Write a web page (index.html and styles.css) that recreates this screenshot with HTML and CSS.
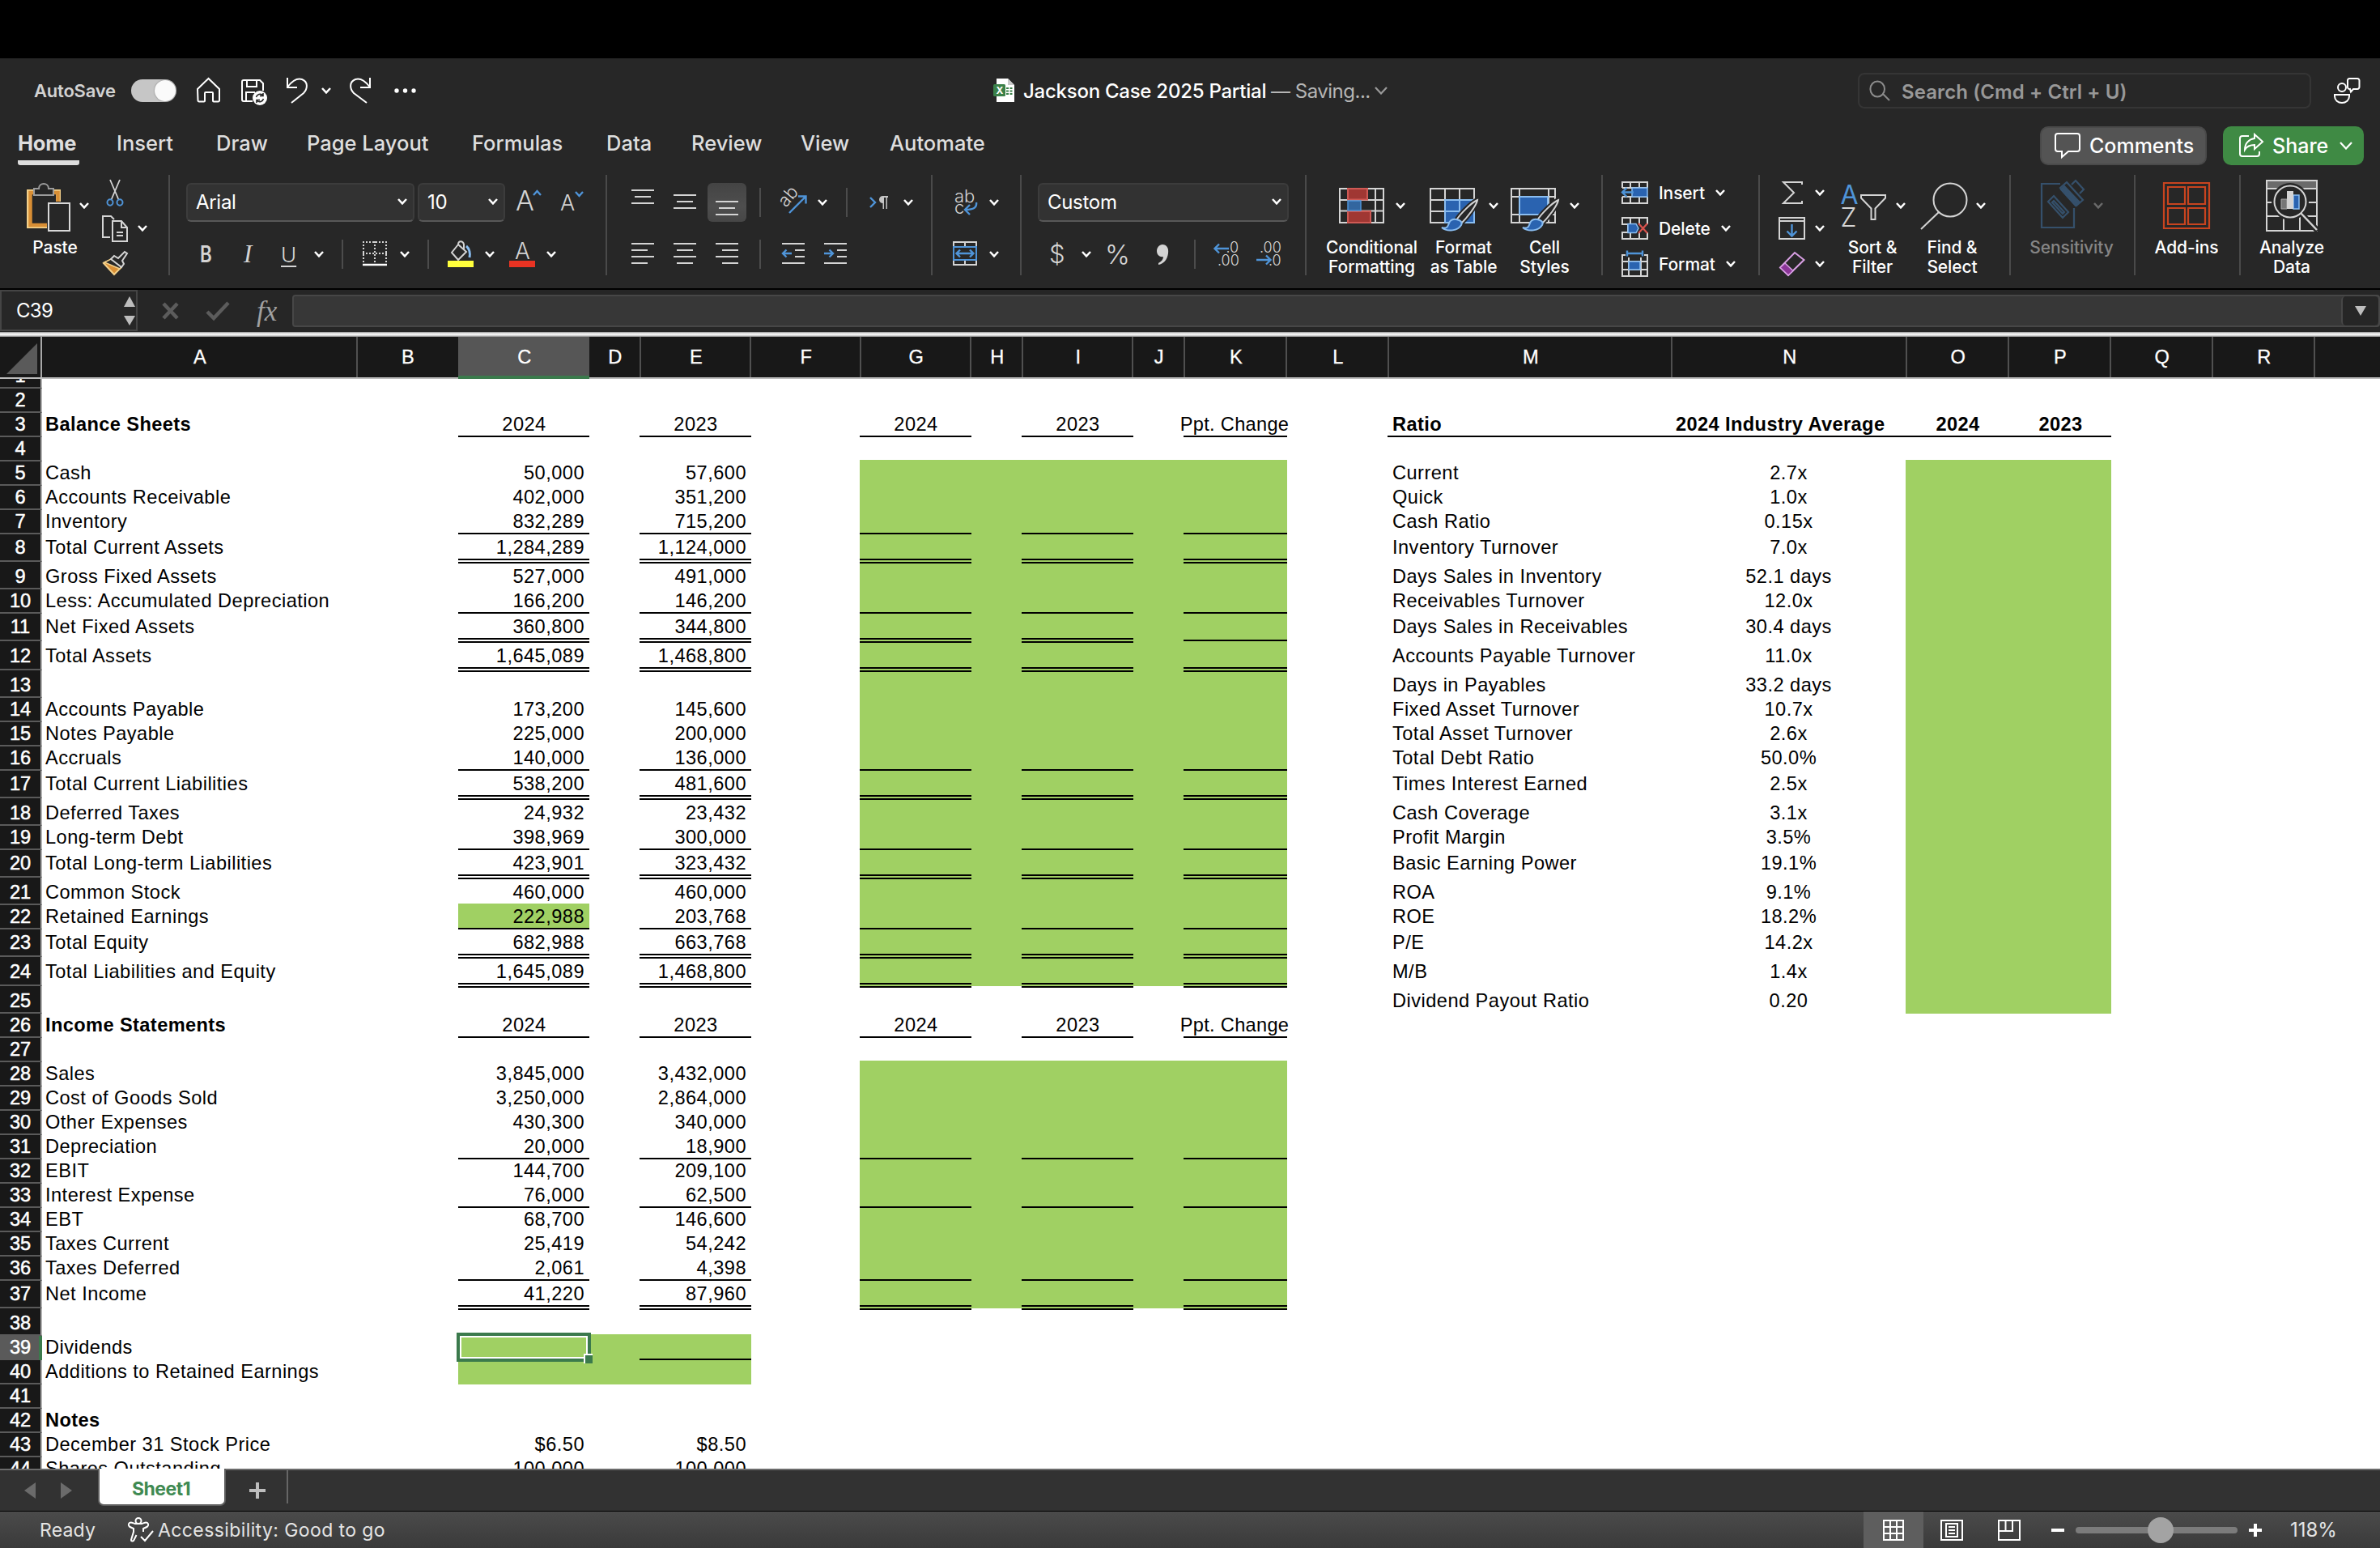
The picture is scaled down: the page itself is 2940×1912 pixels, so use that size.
FILE: index.html
```html
<!DOCTYPE html>
<html lang="en">
<head>
<meta charset="utf-8">
<title>Jackson Case 2025 Partial</title>
<link rel="stylesheet" href="styles.css">
</head>
<body>
<svg class="defs" aria-hidden="true">
  <symbol id="chev" viewBox="0 0 12 8"><path d="M1 1l5 5.4L11 1" fill="none" stroke="currentColor" stroke-width="2.5"/></symbol>
  <symbol id="chev-lg" viewBox="0 0 16 10"><path d="M1 1l7 7.500L15 1" fill="none" stroke="currentColor" stroke-width="2.200"/></symbol>
  <symbol id="brush" viewBox="0 0 48 42"><path d="M46 2C39 5 25 19 20 27l6 4C33 24 45 9 46 2z" fill="#272727" stroke="#272727" stroke-width="6"/><path d="M46 2C39 5 25 19 20 27l6 4C33 24 45 9 46 2z" fill="#272727" stroke="#d4d4d4" stroke-width="2"/><path d="M20 26c-6-1-9 3-10 7s-5 4-8 3c7 6 20 4 24-3 2-4-1-6-6-7z" fill="#2a63b0" stroke="#8abdf0" stroke-width="2"/></symbol>
</svg>

<header class="titlebar">
  <span class="autosave">AutoSave</span>
  <span class="toggle"><i></i></span>
  <svg width="32" height="80" viewBox="242 72 32 80" class="ln w"><path d="M244 110l13.500-13L271 110v14a1.500 1.500 0 0 1-1.500 1.500H264a1 1 0 0 1-1-1V115a1 1 0 0 0-1-1h-8a1 1 0 0 0-1 1v9.500a1 1 0 0 1-1 1h-6a1.500 1.500 0 0 1-1.500-1.500z"/></svg>
  <svg width="34" height="80" viewBox="297 72 34 80" class="ln w"><path d="M312 125h-11a2 2 0 0 1-2-2v-22a2 2 0 0 1 2-2h20l4 4v9M305 99v8h12v-8M304 125v-11h11"/><circle cx="321" cy="121" r="9" fill="#fff" stroke="none"/><path d="M316.500 120a5 5 0 0 1 8-2.500M325 115v3.500h-4M325.500 122a5 5 0 0 1-8 2.500M317 127v-3.500h4" stroke="#272727" stroke-width="1.600"/></svg>
  <svg width="28" height="80" viewBox="353 72 28 80" class="ln w"><path d="M355 96v12h12M355.500 107C361 100 367 96 373 98c8 3 7 12 2 17l-15 12"/></svg>
  <svg class="chev"><use href="#chev"/></svg>
  <svg width="28" height="80" viewBox="430 72 28 80" class="ln w"><path d="M457 96v12h-12M456.500 107C451 100 445 96 439 98c-8 3-7 12-2 17l16 12"/></svg>
  <svg width="28" height="8" viewBox="0 0 28 8"><g fill="#fff"><circle cx="3" cy="4" r="2.700"/><circle cx="13.500" cy="4" r="2.700"/><circle cx="24" cy="4" r="2.700"/></g></svg>
  <svg width="28" height="80" viewBox="1226 72 28 80"><path d="M1231 97h14l8 8v21h-22z" fill="#fff"/><path d="M1245 97v8h8z" fill="#c9c9c9"/><rect x="1227" y="104" width="15" height="15" rx="1.500" fill="#3a8049"/><path d="M1243 108h3v2h-3zm4.500 0h3v2h-3zm-4.500 3.500h3v2h-3zm4.500 0h3v2h-3zm-4.500 3.500h3v2h-3zm4.500 0h3v2h-3z" fill="#3a8049"/><text x="1230.500" y="115.500" class="xl">X</text></svg>
  <span class="doc">Jackson Case 2025 Partial</span>
  <span class="saving">— Saving...</span>
  <svg class="chev-lg dim"><use href="#chev-lg"/></svg>
  <div class="search"><svg width="28" height="28" viewBox="0 0 28 28"><path d="M18 17l8 8M20 11a8.800 9.500 0 1 1-17.600 0 8.800 9.500 0 0 1 17.600 0z" fill="none" stroke="#8c8c8c" stroke-width="2"/></svg><span>Search (Cmd + Ctrl + U)</span></div>
  <svg width="34" height="80" viewBox="2883 72 34 80" class="ln w"><circle cx="2894" cy="108" r="5"/><path d="M2885 117h18v2a9 8 0 0 1-18 0zM2903 97h10a2.500 2.500 0 0 1 2.500 2.500v8a2.500 2.500 0 0 1-2.500 2.500h-5l-3 3.500-1-3.500a2.500 2.500 0 0 1-3-2.500v-8a2.500 2.500 0 0 1 2-2.500z"/></svg>
</header>

<nav class="tabs">
  <a class="on">Home</a><a>Insert</a><a>Draw</a><a>Page Layout</a><a>Formulas</a><a>Data</a><a>Review</a><a>View</a><a>Automate</a>
  <div class="comments"><svg width="34" height="34" viewBox="0 0 34 34" class="ln w"><path d="M5 2h24a3 3 0 0 1 3 3v16a3 3 0 0 1-3 3H18l-8 7v-7H5a3 3 0 0 1-3-3V5a3 3 0 0 1 3-3z"/></svg><span>Comments</span></div>
  <div class="share"><svg width="32" height="32" viewBox="0 0 32 32" class="ln w"><path d="M13 4H5a3 3 0 0 0-3 3v19a3 3 0 0 0 3 3h18a3 3 0 0 0 3-3v-3M20 2l10 9-10 9v-5c-5 0-9 1-12 6 0-8 5-13 12-14z"/></svg><span>Share</span><svg class="chev-lg"><use href="#chev-lg"/></svg></div>
</nav>

<section class="ribbon">
  <div class="group g1">
    <div class="big"><div class="art"><svg width="56" height="64" viewBox="33 222 56 64"><path d="M73 249v-12H37v42h22" fill="none" stroke="#f3d08a" stroke-width="6"/><path d="M72.500 249v-11H38.500v40H59" fill="none" stroke="#d98f35" stroke-width="4.500"/><path d="M43 241v-8h6c0-8 12-8 12 0h6v8z" fill="#272727" stroke="#9b9b9b" stroke-width="2"/><path d="M61 251h26v34H61z" fill="#272727" stroke="#d9d9d9" stroke-width="2"/></svg><svg class="chev"><use href="#chev"/></svg></div><span>Paste</span></div>
    <div class="clip">
      <svg width="34" height="44" viewBox="126 216 34 44" class="ln"><path d="M136 222l10.500 24.500M148 222l-10.500 24.500" stroke-width="1.800"/><g stroke="#4f94d8"><ellipse cx="136" cy="250" rx="3.500" ry="3.800"/><ellipse cx="148" cy="250" rx="3.500" ry="3.800"/></g></svg><i></i>
      <svg width="34" height="44" viewBox="126 260 34 44" class="ln"><path d="M136 293h-9v-26h10l4 4M139 273h11l7 8v17h-18zM150 273v8h7M144 287h8M144 291h8"/></svg><svg class="chev"><use href="#chev"/></svg>
      <svg width="34" height="44" viewBox="126 304 34 44"><path d="M128 325l9-4 13 9-9 9z" fill="#d98f35" stroke="#f3d08a" stroke-width="2"/><path d="M129 324l8-4 13 9-2 3z" fill="#272727" stroke="#f3d08a" stroke-width="1.500"/><path d="M137 320l4-4 5 3 8-8 3 2-6 9 2 4-3 4z" fill="#272727" stroke="#d4d4d4" stroke-width="2"/></svg>
    </div>
  </div>
  <div class="group g2">
    <div class="row r-font">
      <div class="box"><span>Arial</span><svg class="chev"><use href="#chev"/></svg></div>
      <div class="box sz"><span>10</span><svg class="chev"><use href="#chev"/></svg></div>
      <svg width="34" height="48" viewBox="636 226 34 48"><text x="637" y="260" font-size="34" class="lt">A</text><path d="M659 241l4.500-5 4.500 5" class="bl"/></svg>
      <svg width="34" height="48" viewBox="690 226 34 48"><text x="692" y="260" font-size="27" class="lt">A</text><path d="M711 237l4.500 5 4.500-5" class="bl"/></svg>
    </div>
    <div class="row r-style">
      <b class="gB">B</b><i class="gI">I</i><u class="gU">U</u><svg class="chev"><use href="#chev"/></svg><hr>
      <svg width="32" height="48" viewBox="447 290 32 48"><path d="M448 299h30M448 313h30M449 298v27M463 298v27M477 298v27" stroke="#d4d4d4" stroke-width="2" stroke-dasharray="2 2"/><path d="M448 327h30" stroke="#fff" stroke-width="2.500"/></svg><svg class="chev"><use href="#chev"/></svg><hr>
      <svg width="34" height="48" viewBox="553 290 34 48"><path d="M567 302l-8 10 8 9 10-10zM567 302c0-5 6-5 7 0v7" class="ln" fill="none"/><path d="M577 304c4 3 5 9 4 14" stroke="#8abdf0" stroke-width="3" fill="none"/><path d="M554 322h32v8h-32z" fill="#ffff3c"/></svg><svg class="chev"><use href="#chev"/></svg>
      <svg width="34" height="48" viewBox="629 290 34 48"><text x="637" y="320" font-size="28" class="lt">A</text><path d="M630 322h32v8h-32z" fill="#e93323"/></svg><svg class="chev"><use href="#chev"/></svg>
    </div>
  </div>
  <div class="group g3">
    <div class="row r-al1">
      <svg width="28" height="48" viewBox="780 226 28 48" class="ln"><path d="M780 235h28M784 243h20M780 251h28"/></svg>
      <svg width="28" height="48" viewBox="832 226 28 48" class="ln"><path d="M832 241h28M836 249h20M832 257h28"/></svg>
      <svg width="48" height="48" viewBox="874 226 48 48" class="ln act"><path d="M884 249h28M888 257h20M884 265h28"/></svg><hr>
      <svg width="36" height="48" viewBox="962 226 36 48"><text x="0" y="0" font-size="22" class="lt" transform="translate(971 257) rotate(-50)">ab</text><path d="M975 263l20-20M986 242.500h9.500v9" class="bl"/></svg><svg class="chev"><use href="#chev"/></svg><hr>
      <svg width="30" height="48" viewBox="1072 226 30 48"><path d="M1075 244l6 6-6 6" class="bl"/><path d="M1091 242h7v2h-1v14h-1.500v-14H1093v14h-1.500v-7a4.500 4.500 0 0 1 0-9z" fill="#c4c4c4" transform="translate(-1 0)"/></svg><svg class="chev"><use href="#chev"/></svg>
    </div>
    <div class="row r-al2">
      <svg width="28" height="48" viewBox="780 290 28 48" class="ln"><path d="M780 301h28M780 309h20M780 317h28M780 325h20"/></svg>
      <svg width="28" height="48" viewBox="832 290 28 48" class="ln"><path d="M832 301h28M836 309h20M832 317h28M836 325h20"/></svg>
      <svg width="28" height="48" viewBox="884 290 28 48" class="ln"><path d="M884 301h28M892 309h20M884 317h28M892 325h20"/></svg><hr>
      <svg width="28" height="48" viewBox="966 290 28 48" class="ln"><path d="M966 301h28M982 309h12M982 317h12M966 325h28"/><path d="M978 313h-11M971.500 308.500l-4.500 4.500 4.500 4.500" class="bl"/></svg>
      <svg width="28" height="48" viewBox="1018 290 28 48" class="ln"><path d="M1018 301h28M1034 309h12M1034 317h12M1018 325h28"/><path d="M1018 313h11M1024.500 308.500l4.500 4.500-4.500 4.500" class="bl"/></svg>
    </div>
  </div>
  <div class="group g4">
    <div class="row r-wrap"><svg width="32" height="48" viewBox="1178 226 32 48"><text x="1180" y="249.500" font-size="22" class="lt">ab</text><text x="1180" y="264" font-size="22" class="lt">c</text><path d="M1207 250c1 6-3 9-13 9M1199 253l-6 6 6 6" class="bl"/></svg><svg class="chev"><use href="#chev"/></svg></div>
    <div class="row r-wrap"><svg width="32" height="48" viewBox="1176 290 32 48" class="ln"><path d="M1177 299h28v28h-28zM1191 298v7M1191 321v7"/><path d="M1177 305h28v16h-28z" stroke="#4f94d8" fill="#272727"/><path d="M1181 313h20M1185 308.500l-4.500 4.500 4.500 4.500M1197 308.500l4.500 4.500-4.500 4.500" class="bl"/></svg><svg class="chev"><use href="#chev"/></svg></div>
  </div>
  <div class="group g5">
    <div class="row"><div class="box num"><span>Custom</span><svg class="chev"><use href="#chev"/></svg></div></div>
    <div class="row r-num">
      <span class="sym">$</span><svg class="chev"><use href="#chev"/></svg><span class="sym pc">%</span>
      <svg width="18" height="48" viewBox="1427 290 18 48"><path d="M1435 302c5 0 8 4 7 11-1 8-6 13-12 14v-2c4-2 6-5 6-8-4 1-8-2-8-7 0-4 3-8 7-8z" fill="#d4d4d4"/></svg><hr>
      <svg width="34" height="48" viewBox="1498 290 34 48"><text x="1514.500" y="311.500" font-size="18" class="lt">.0</text><text x="1504" y="328" font-size="18" class="lt">.00</text><path d="M1518 307h-17M1506 301.500l-5.500 5.500 5.500 5.500" class="bl"/></svg>
      <svg width="34" height="48" viewBox="1550 290 34 48"><text x="1556" y="311.500" font-size="18" class="lt">.00</text><text x="1567" y="328" font-size="18" class="lt">.0</text><path d="M1552 321h17M1564 315.500l5.500 5.500-5.500 5.500" class="bl"/></svg>
    </div>
  </div>
  <div class="group g6">
    <div class="big"><div class="art"><svg width="60" height="64" viewBox="1654 222 60 64"><path d="M1655 233h54v42h-54zM1655 247h54M1655 260.500h54M1699 233v42" class="ln"/><path d="M1665 233h24v13.500h-24zM1665 261h28v14h-28z" fill="#a03733" stroke="#cf5a55" stroke-width="2"/><path d="M1665 248h16v12h-16z" fill="#33669f" stroke="#4f94d8" stroke-width="1.500"/></svg><svg class="chev"><use href="#chev"/></svg></div><span>Conditional<br>Formatting</span></div>
    <div class="big"><div class="art"><svg width="64" height="64" viewBox="1768 222 64 64"><path d="M1770 233h54v42h-54zM1770 247h54M1770 261h54M1788 233v42M1806 233v42" class="ln"/><path d="M1788 247h36v28h-36zM1788 261h36M1806 247v28" fill="#2a63b0" stroke="#8abdf0" stroke-width="2"/><use href="#brush" x="1782" y="245" width="48" height="42"/></svg><svg class="chev"><use href="#chev"/></svg></div><span>Format<br>as Table</span></div>
    <div class="big"><div class="art"><svg width="64" height="64" viewBox="1868 222 64 64"><path d="M1870 233h54v42h-54zM1880 233v42M1916 233v42M1870 243h54M1870 265h54" class="ln"/><path d="M1880 243h35v22h-35z" fill="#2a63b0" stroke="#8abdf0" stroke-width="2"/><use href="#brush" x="1882" y="245" width="48" height="42"/></svg><svg class="chev"><use href="#chev"/></svg></div><span>Cell<br>Styles</span></div>
  </div>
  <div class="group g7">
    <div class="line"><svg width="34" height="44" viewBox="2004 216 34 44"><path d="M2005 232v-7h31v7M2005 243v8h31v-8M2015 225v7M2026 225v7M2015 244v7M2026 244v7M2005 232h31M2005 243h31" class="ln"/><path d="M2017 232h19v11h-19z" fill="#2a63b0" stroke="#8abdf0" stroke-width="1.500"/><path d="M2019 237.500h-14M2010.500 232l-5.500 5.500 5.500 5.500" class="bl"/></svg><span>Insert</span><svg class="chev"><use href="#chev"/></svg></div>
    <div class="line"><svg width="34" height="44" viewBox="2004 260 34 44"><path d="M2036 277v-8h-31v8h7v10h-7v8h31v-8M2015 269v8M2026 269v8M2015 287v8M2026 287v8" class="ln"/><path d="M2012 276.500h10l3 5.500-3 5.500h-10z" fill="#2a63b0" stroke="#8abdf0" stroke-width="1.500"/><path d="M2025 276l11 12M2036 276l-11 12" stroke="#d9534d" stroke-width="2.200"/></svg><span>Delete</span><svg class="chev"><use href="#chev"/></svg></div>
    <div class="line"><svg width="34" height="44" viewBox="2004 304 34 44"><path d="M2009 315h-4v26h31v-26h-4M2013 318v23M2028 318v23M2005 323h31M2005 333h31" class="ln"/><path d="M2013 323h14v10h-14z" fill="#2a63b0" stroke="#8abdf0" stroke-width="1.500"/><path d="M2011 313h19M2011 309.500v7M2030 309.500v7" class="bl"/></svg><span>Format</span><svg class="chev"><use href="#chev"/></svg></div>
  </div>
  <div class="group g8">
    <div class="clip ed">
      <svg width="34" height="44" viewBox="2198 216 34 44" class="ln"><path d="M2227 228v-3h-23l13 13-13 13h23v-3"/></svg><svg class="chev"><use href="#chev"/></svg>
      <svg width="34" height="44" viewBox="2198 260 34 44" class="ln"><path d="M2199 269h31v26h-31zM2199 273h31"/><path d="M2214.500 277v14M2208.500 285.500l6 6 6-6" class="bl"/></svg><svg class="chev"><use href="#chev"/></svg>
      <svg width="34" height="44" viewBox="2198 304 34 44"><path d="M2218 312l11.500 9-19.500 19-10-9.500z" fill="none" stroke="#d9a0e4" stroke-width="2"/><path d="M2206 325l10 9.500-6 5.500-10-9.500z" fill="#8b3598" stroke="#d9a0e4" stroke-width="1.500"/></svg><svg class="chev"><use href="#chev"/></svg>
    </div>
    <div class="big"><div class="art"><svg width="60" height="64" viewBox="2271 222 60 64"><text x="2272.500" y="252" font-size="32" class="lt blt">A</text><text x="2272.500" y="280" font-size="32" class="lt">Z</text><path d="M2298 241h30v3.500l-12.500 13V271h-5v-13.500l-12.500-13z" class="ln"/></svg><svg class="chev"><use href="#chev"/></svg></div><span>Sort &amp;<br>Filter</span></div>
    <div class="big"><div class="art"><svg width="60" height="64" viewBox="2370 222 60 64" class="ln"><circle cx="2408" cy="247" r="20.500"/><path d="M2394 262l-22 21"/></svg><svg class="chev"><use href="#chev"/></svg></div><span>Find &amp;<br>Select</span></div>
  </div>
  <div class="group g9"><div class="big off"><div class="art"><svg width="56" height="64" viewBox="2524 222 56 64" fill="none" stroke="#35506b" stroke-width="2.200"><path d="M2549 227h-23v54h40v-24"/><path d="M2541 242l18 20-7 7-18-20zM2541 248l13 14-2 2-13-14zM2557 225l20 22-8 7-20-22zM2563 228l5-5 10 11-5 5"/><path d="M2550 234l4-4 19 20-5 4z" fill="#35506b"/></svg><svg class="chev"><use href="#chev"/></svg></div><span>Sensitivity</span></div></div>
  <div class="group g10"><div class="big"><div class="art"><svg width="60" height="64" viewBox="2670 222 60 64" fill="none" stroke="#c8441f" stroke-width="2.200"><path d="M2672 226h56v56h-56zM2677 231h21v21h-21zM2702 231h21v21h-21zM2677 257h21v20h-21zM2702 257h21v20h-21z"/></svg></div><span>Add-ins</span></div></div>
  <div class="group g11"><div class="big"><div class="art"><svg width="66" height="64" viewBox="2798 222 66 64"><path d="M2800 223h62v10h-62z" fill="#6b6b6b"/><path d="M2800 223h62v62h-62zM2800 233h62M2800 250h62M2800 267h62M2821 267v18M2841 267v18" class="ln"/><circle cx="2829" cy="249" r="23" fill="#272727"/><circle cx="2829" cy="249" r="19.500" class="ln"/><path d="M2818 246h7v12h-7z" fill="#777" stroke="#aaa"/><path d="M2833 241h7v17h-7z" fill="#2a63b0" stroke="#8abdf0" stroke-width="1.500"/><path d="M2825 236h8v22h-8z" fill="#d4d4d4"/><path d="M2843 264l20 21" stroke="#272727" stroke-width="7"/><path d="M2842 263l20 21" stroke="#d4d4d4" stroke-width="2.500"/></svg></div><span>Analyze<br>Data</span></div></div>
</section>

<div class="formula">
  <div class="namebox"><span>C39</span><svg width="16" height="38" viewBox="0 0 16 38"><path d="M8 1l7 13H1zM8 37L1 25h14z" fill="#bdbdbd"/></svg></div>
  <svg width="24" height="24" viewBox="0 0 24 24"><path d="M3 3l17 18M20 3L3 21" stroke="#5c5c5c" stroke-width="4.500"/></svg>
  <svg width="30" height="24" viewBox="0 0 30 24"><path d="M2 13l8 8L28 2" stroke="#5c5c5c" stroke-width="4.500" fill="none"/></svg>
  <i class="fx">fx</i>
  <div class="input"><div class="drop"><svg width="14" height="12" viewBox="0 0 14 12"><path d="M0 0h14L7 12z" fill="#bdbdbd"/></svg></div></div>
</div>
<div class="band"></div>

<main class="sheet">
  <div class="colhead" id="colhead"><div class="corner"><svg width="38" height="38" viewBox="0 0 38 38"><path d="M38 0v38H0z" fill="#5a5a5a"/></svg></div></div>
  <div class="rows" id="rows"></div>
</main>

<div class="sheettabs">
  <svg width="14" height="20" viewBox="0 0 14 20"><path d="M14 0v20L0 10z" fill="#6b6b6b"/></svg>
  <svg width="14" height="20" viewBox="0 0 14 20"><path d="M0 0v20l14-10z" fill="#6b6b6b"/></svg>
  <div class="tab">Sheet1</div>
  <svg width="20" height="20" viewBox="0 0 20 20"><path d="M10 0v20M0 10h20" stroke="#bdbdbd" stroke-width="4"/></svg>
  <hr>
</div>

<footer class="status">
  <span>Ready</span>
  <svg width="34" height="45" viewBox="157 1867 34 45" class="ln w"><circle cx="171" cy="1878.500" r="3.500"/><path d="M159 1882c-1 3 1 4 6 6v4l-3 10c0 2 3 2 3.500 0l3-6M183 1882c1 3-1 4-6 6v4M159 1882c2-3 4-1 8 0h8c4-1 6-3 8 0M174 1898l5 5 10-12"/></svg>
  <span class="acc">Accessibility: Good to go</span>
  <div class="view on"><svg width="28" height="28" viewBox="0 0 28 28" class="ln w"><path d="M2 2h24v24H2zM2 10h24M2 18h24M10 2v24M18 2v24"/></svg></div>
  <svg width="28" height="28" viewBox="0 0 28 28" class="ln w"><path d="M1 2h26v24H1zM7 6h14v16H7zM10 10h8M10 14h8M10 18h8"/></svg>
  <svg width="28" height="28" viewBox="0 0 28 28" class="ln w"><path d="M1 2h26v24H1zM1 15h17V2M9.500 2v13"/></svg>
  <i class="minus"></i>
  <div class="zoom"><i></i></div>
  <svg width="16" height="16" viewBox="0 0 16 16"><path d="M8 0v16M0 8h16" stroke="#fff" stroke-width="4"/></svg>
  <span class="pct">118%</span>
</footer>
<script src="sheet.js"></script>
</body>
</html>
```
FILE: styles.css
```css
*, *::before, *::after { box-sizing: border-box; }
body { margin: 0; width: 2940px; height: 1912px; overflow: hidden; background: #000; padding-top: 72px; color: #fff; font-family: Inter, "Liberation Sans", sans-serif; font-size: 22px; }
svg { display: block; flex: none; overflow: visible; }
.defs { position: absolute; width: 0; height: 0; }
hr { margin: 0; border: 0; width: 2px; height: 36px; background: #4c4c4c; }
.chev { width: 12px; height: 8px; color: #fff; }
.chev-lg { width: 16px; height: 10px; }
.dim { color: #9a9a9a; }
.ln { fill: none; stroke: #d4d4d4; stroke-width: 2; }
.ln.w { stroke: #fff; }
.bl { fill: none; stroke: #4f94d8; stroke-width: 2.4; }
.lt { font-family: Inter, sans-serif; font-weight: 300; fill: #d4d4d4; stroke: none; }
.blt { fill: #4f94d8; font-weight: 400; }
.xl { font-size: 12px; font-weight: 700; fill: #fff; font-family: Inter, sans-serif; }

.titlebar { height: 80px; background: #272727; padding-left: 42px; display: grid; grid-template-columns: 120px 80px 55px 56px 44px 33px 57px 739px 38px 306px 128px 597px 587px 40px; align-items: center; white-space: nowrap; }
.autosave { color: #d2d2d2; font-weight: 600; font-size: 22px; letter-spacing: -.2px; }
.toggle { width: 56px; height: 28px; border-radius: 14px; background: #c6c6c6; padding: 1px; display: flex; justify-content: flex-end; }
.toggle i { width: 26px; height: 26px; border-radius: 50%; background: #fafafa; box-shadow: 0 0 2px #777; }
.doc { font-size: 24px; font-weight: 500; letter-spacing: -.25px; }
.saving { font-size: 24px; color: #b5b5b5; letter-spacing: -.5px; }
.search { width: 560px; height: 44px; border: 2px solid #353535; border-radius: 8px; display: flex; align-items: center; gap: 13px; padding: 2px 0 0 11px; color: #989898; font-weight: 600; font-size: 24px; letter-spacing: .1px; }

.tabs { height: 56px; background: #272727; padding-left: 22px; display: grid; grid-template-columns: 122px 123px 112px 204px 166px 105px 135px 110px 1421px 226px 194px; align-items: start; white-space: nowrap; font-size: 25.5px; font-weight: 500; color: #dedede; }
.tabs a { padding-top: 10px; line-height: 30px; height: 52px; }
.tabs .on { font-weight: 700; width: 76px; border-bottom: 6px solid #dedede; border-radius: 3px; letter-spacing: -.2px; }
.comments, .share { margin-top: 4px; height: 48px; border-radius: 10px; display: flex; align-items: center; color: #fff; font-size: 25px; }
.comments { width: 206px; background: #545454; border: 2px solid #4a4a4a; padding-left: 15px; gap: 10px; }
.share { width: 174px; background: #3f8a44; padding-left: 19px; gap: 10px; }
.share .chev-lg { margin-left: 4px; }

.ribbon { height: 148px; background: #272727; display: flex; }
.group { height: 124px; margin-top: 8px; border-right: 2px solid #4a4a4a; padding-top: 10px; display: flex; flex-direction: column; gap: 16px; flex: none; }
.g1, .g6, .g8, .g9, .g10, .g11 { flex-direction: row; gap: 0; padding-top: 0; }
.g1 { width: 210px; } .g2 { width: 540px; } .g3 { width: 402px; } .g4 { width: 110px; } .g5 { width: 352px; } .g6 { width: 366px; } .g7 { width: 194px; } .g8 { width: 310px; } .g9 { width: 154px; } .g10 { width: 130px; } .g11 { width: 172px; border: 0; }
.row { height: 48px; display: grid; align-items: center; }
.box { height: 48px; background: #323232; border: 2px solid #3c3c3c; border-bottom-color: #585858; border-radius: 6px; padding: 0 7px 2px 10px; display: flex; align-items: center; justify-content: space-between; width: 282px; font-size: 24px; letter-spacing: -.3px; }
.box.sz { width: 108px; } .box.num { width: 310px; margin-left: 20px; }
.r-font { padding-left: 20px; grid-template-columns: 286px 120px 54px 40px; }
.r-style { padding-left: 37px; grid-template-columns: 52px 48px 41px 34px 25px 47px 34px 24px 47px 29px 47px 20px; }
.gB { font-size: 28px; font-weight: 600; color: #d4d4d4; transform: scaleX(.8); transform-origin: 0 50%; }
.gI { font: italic 31px "Liberation Serif", serif; color: #d4d4d4; padding-left: 2px; }
.gU { font-size: 26px; font-weight: 300; color: #d4d4d4; text-underline-offset: 4px; }
.r-al1, .r-al2 { padding-left: 30px; }
.r-al1 { grid-template-columns: 52px 42px 64px 24px 48px 35px 27px 44px 20px; }
.r-al2 { grid-template-columns: 52px 52px 54px 28px 52px 30px; }
.act { background: linear-gradient(#444, #4e4e4e 60%, #464646); border-radius: 6px; }
.r-wrap { padding-left: 25px; grid-template-columns: 45px 20px; }
.r-num { padding-left: 34px; grid-template-columns: 40px 30px 62px 47px 23px 52px 34px; }
.sym { font-size: 31px; font-weight: 300; color: #d4d4d4; line-height: 48px; }
.sym.pc { margin-left: -1px; font-size: 33px; }
.big { padding-top: 6px; display: flex; flex-direction: column; align-items: center; white-space: nowrap; text-align: center; font-size: 21px; line-height: 24px; letter-spacing: -.1px; font-weight: 500; }
.big .art { display: flex; align-items: center; gap: 10px; margin-bottom: 8px; }
.g1 .big { width: 142px; margin-right: -16px; }
.g1 .big > span { margin-right: 6px; }
.clip { display: grid; grid-template-columns: 44px 12px; grid-template-rows: repeat(3, 44px); align-items: center; height: 124px; margin-top: -4px; }
.clip { grid-template-rows: 44px 44px 44px; margin-top: 0; position: relative; }
.clip.ed { grid-template-columns: 45px 12px; margin-left: 23px; }
.g6 { display: grid; grid-template-columns: 161px 66px 134px; }
.g6 .big, .g8 .big { justify-self: center; }
.g8 { display: grid; grid-template-columns: 89px 100px 97px; }
.g9 .big, .g10 .big { width: 100%; padding-right: 2px; }
.g11 .big { width: 126px; }
.off { color: #858585; } .off .chev { color: #6a6a6a; }
.g7 { padding: 0 0 0 23px; gap: 0; }
.line { height: 44px; display: flex; align-items: center; flex: none; font-size: 21px; font-weight: 500; letter-spacing: -.1px; }
.line span { margin: 0 13px 0 12px; }

.formula { height: 54px; border-top: 2px solid #000; background: #262626; display: grid; grid-template-columns: 199px 55px 63px 44px 1fr; align-items: center; }
.namebox { align-self: start; width: 170px; height: 51px; border: 2px solid #454545; background: #272727; display: flex; justify-content: space-between; align-items: center; padding: 0 0 0 18px; font-size: 24px; letter-spacing: -.7px; }
.namebox span { padding-bottom: 1px; }
.fx { font: italic 35px "Liberation Serif", serif; color: #a0a0a0; line-height: 40px; padding-top: 2px; }
.input { height: 40px; background: #373737; border: 2px solid #474747; border-radius: 4px; display: flex; justify-content: flex-end; }
.drop { width: 46px; height: 36px; background: #262626; border-left: 2px solid #474747; border-radius: 5px; display: flex; align-items: center; justify-content: center; }
.band { height: 6px; background: linear-gradient(#8e8e8e, #e8e8e8 30%, #f8f8f8 55%, #cfcfcf 75%, #8a8a8a); }

.sheet { height: 1398px; background: #fff; color: #000; overflow: hidden; font: 23.6px "Liberation Sans", Arial, sans-serif; letter-spacing: .47px; }
.colhead { height: 52px; background: #181818; border-bottom: 2px solid #bcbcbc; color: #fff; display: grid; grid-template-columns: 52px 390px 124px 162px 64px 136px 136px 136px 64px 136px 64px 126px 126px 350px 290px 126px 126px 126px 126px 80px; position: relative; z-index: 3; -webkit-text-stroke: .3px #fff; }
.colhead div { height: 50px; border-right: 2px solid #505050; display: flex; align-items: center; justify-content: center; padding: 1px 0 0 2px; }
.colhead .corner { justify-content: flex-end; align-items: flex-end; padding: 0 4px 4px 0; border-color: #a8a8a8; }
.colhead .sel { background: #565656; border: 0; box-shadow: inset 0 -2px #3b7a4c, 0 2px #3b7a4c; }
.colhead .plain { border-color: transparent; }
.srow { display: grid; grid-template-columns: 52px 390px 124px 162px 62px 138px 134px 138px 62px 138px 62px 128px 124px 350px 290px 128px 126px; }
.srow > div { grid-row: 1; height: 100%; min-width: 0; position: relative; display: flex; align-items: flex-end; white-space: nowrap; line-height: 28px; padding-bottom: 2px; z-index: 2; }
.srow.tall > div { padding-bottom: 4px; }
.srow > .rh { background: #181818; color: #fff; border-bottom: 2px solid #5a5a5a; border-right: 2px solid #b0b0b0; justify-content: center; padding-bottom: 0; overflow: hidden; -webkit-text-stroke: .5px #fff; letter-spacing: 0; }
.srow.tall > .rh { padding-bottom: 2px; }
.srow > .rh.sel { background: #5a5a5a; border-right: 4px solid #3b7a4c; border-bottom: 0; padding-bottom: 2px; padding-left: 2px; }
.left { padding-left: 4px; }
.mcol { padding-left: 6px; }
.right { justify-content: flex-end; padding-right: 6px; }
.center { justify-content: center; padding-left: 1px; }
.wide { justify-content: center; padding-right: 2px; letter-spacing: .3px; }
.bold { font-weight: 700; letter-spacing: .4px; }
.srow > .fill { background: #a0d063; margin-top: -2px; height: calc(100% + 2px); z-index: 1; }
.single::after, .double::after { content: ""; position: absolute; left: 0; right: 0; bottom: 0; height: 2px; background: #000; }
.double::after { bottom: -2px; height: 6px; background: none; border: solid #000; border-width: 2px 0; }
.cursor { position: absolute; left: -2px; right: -2px; top: -4px; bottom: -2px; border: 4px solid #3b7a4c; box-shadow: inset 0 0 0 2px #fff; }
.cursor::after { content: ""; position: absolute; right: -6px; bottom: -6px; width: 11px; height: 12px; background: #3b7a4c; border: solid #fff; border-width: 2px 0 0 2px; }

.sheettabs { height: 52px; background: #323232; border-top: 2px solid #6b6b6b; display: grid; grid-template-columns: 45px 46px 187px 46px 10px; padding-left: 30px; align-items: center; }
.tab { align-self: start; margin-top: -2px; width: 158px; height: 46px; background: #fff; border: 2px solid #5e5e5e; border-top: 0; border-radius: 0 0 7px 7px; color: #3f8a52; font-weight: 700; font-size: 23px; letter-spacing: -.5px; display: flex; justify-content: center; align-items: center; padding: 6px 2px 0 0; }
.sheettabs hr { align-self: start; height: 41px; background: #666; }
.status { height: 46px; border-top: 1px solid #000; background: linear-gradient(#4b4b4b, #3a3a3a); color: #e4e4e4; font-size: 23px; letter-spacing: .2px; display: grid; grid-template-columns: 108px 38px 2107px 95px 71px 66px 30px 214px 51px 80px; padding-left: 49px; align-items: center; white-space: nowrap; }
.acc { letter-spacing: .4px; }
.view { width: 74px; height: 45px; background: #5e5e5e; display: flex; align-items: center; justify-content: center; }
.minus { width: 16px; height: 4px; background: #fff; }
.zoom { width: 200px; height: 8px; border-radius: 4px; background: #7b7b7b; display: flex; align-items: center; padding-left: 89px; }
.zoom i { width: 32px; height: 32px; border-radius: 50%; background: #a3a3a3; }
.pct { font-size: 24px; letter-spacing: 0; }
```
FILE: sheet.js
```js
const COLS = 'ABCDEFGHIJKLMNOPQR';
const NUMERIC = ['C', 'E', 'G', 'I', 'K'];

// [height, account, 2024, 2023, underline, ratio, industry average]
const ROWS = [
  [12], [30],
  [30, 'Balance Sheets', '2024', '2023', 'single', 'Ratio', '2024 Industry Average'],
  [30],
  [30, 'Cash', '50,000', '57,600', '', 'Current', '2.7x'],
  [30, 'Accounts Receivable', '402,000', '351,200', '', 'Quick', '1.0x'],
  [30, 'Inventory', '832,289', '715,200', 'single', 'Cash Ratio', '0.15x'],
  [34, 'Total Current Assets', '1,284,289', '1,124,000', 'double', 'Inventory Turnover', '7.0x'],
  [34, 'Gross Fixed Assets', '527,000', '491,000', '', 'Days Sales in Inventory', '52.1 days'],
  [30, 'Less: Accumulated Depreciation', '166,200', '146,200', 'single', 'Receivables Turnover', '12.0x'],
  [34, 'Net Fixed Assets', '360,800', '344,800', 'double', 'Days Sales in Receivables', '30.4 days'],
  [36, 'Total Assets', '1,645,089', '1,468,800', 'double', 'Accounts Payable Turnover', '11.0x'],
  [34, '', '', '', '', 'Days in Payables', '33.2 days'],
  [30, 'Accounts Payable', '173,200', '145,600', '', 'Fixed Asset Turnover', '10.7x'],
  [30, 'Notes Payable', '225,000', '200,000', '', 'Total Asset Turnover', '2.6x'],
  [30, 'Accruals', '140,000', '136,000', 'single', 'Total Debt Ratio', '50.0%'],
  [34, 'Total Current Liabilities', '538,200', '481,600', 'double', 'Times Interest Earned', '2.5x'],
  [34, 'Deferred Taxes', '24,932', '23,432', '', 'Cash Coverage', '3.1x'],
  [30, 'Long-term Debt', '398,969', '300,000', 'single', 'Profit Margin', '3.5%'],
  [34, 'Total Long-term Liabilities', '423,901', '323,432', 'double', 'Basic Earning Power', '19.1%'],
  [34, 'Common Stock', '460,000', '460,000', '', 'ROA', '9.1%'],
  [30, 'Retained Earnings', '222,988', '203,768', 'single', 'ROE', '18.2%'],
  [34, 'Total Equity', '682,988', '663,768', 'double', 'P/E', '14.2x'],
  [36, 'Total Liabilities and Equity', '1,645,089', '1,468,800', 'double', 'M/B', '1.4x'],
  [34, '', '', '', '', 'Dividend Payout Ratio', '0.20'],
  [30, 'Income Statements', '2024', '2023', 'single'],
  [30],
  [30, 'Sales', '3,845,000', '3,432,000'],
  [30, 'Cost of Goods Sold', '3,250,000', '2,864,000'],
  [30, 'Other Expenses', '430,300', '340,000'],
  [30, 'Depreciation', '20,000', '18,900', 'single'],
  [30, 'EBIT', '144,700', '209,100'],
  [30, 'Interest Expense', '76,000', '62,500', 'single'],
  [30, 'EBT', '68,700', '146,600'],
  [30, 'Taxes Current', '25,419', '54,242'],
  [30, 'Taxes Deferred', '2,061', '4,398', 'single'],
  [34, 'Net Income', '41,220', '87,960', 'double'],
  [34],
  [30, 'Dividends'],
  [30, 'Additions to Retained Earnings'],
  [30],
  [30, 'Notes'],
  [30, 'December 31 Stock Price', '$6.50', '$8.50'],
  [30, 'Shares Outstanding', '100,000', '100,000'],
];

const FILLS = [['G', 'K', 5, 24], ['G', 'K', 28, 37], ['O', 'P', 5, 25], ['C', 'C', 22, 22], ['C', 'E', 39, 40]];
const track = c => COLS.indexOf(c) + 2;

function add(row, cls, text, from, to = from) {
  const el = document.createElement('div');
  el.className = cls;
  el.textContent = text || '';
  el.style.gridColumn = `${from} / ${to + 1}`;
  row.append(el);
  return el;
}

const head = document.getElementById('colhead');
for (const c of COLS) {
  const el = document.createElement('div');
  el.textContent = c;
  if (c === 'C') el.className = 'sel';
  if (c === 'B') el.className = 'plain';
  head.append(el);
}

const body = document.getElementById('rows');
ROWS.forEach(([height, label, now, before, line, ratio, average], i) => {
  const n = i + 1;
  const heading = n === 3 || n === 26;
  const row = document.createElement('div');
  row.className = 'srow' + (line === 'double' ? ' tall' : '');
  row.style.height = height + 'px';
  add(row, n === 39 ? 'rh sel' : 'rh', String(n), 1);
  for (const [a, b, top, end] of FILLS) {
    if (n >= top && n <= end) add(row, 'fill', '', track(a), track(b));
  }
  if (label) add(row, 'left' + (heading || n === 42 ? ' bold' : ''), label, 2);
  const values = { C: now, E: before };
  if (heading) Object.assign(values, { G: '2024', I: '2023', K: 'Ppt. Change' });
  for (const c of NUMERIC) {
    if (!values[c] && !line) continue;
    const rule = n === 11 && c === 'K' ? 'single' : line || '';
    const align = heading ? (c === 'K' ? 'wide' : 'center') : 'right';
    add(row, `${align} ${rule}`, values[c], track(c));
  }
  if (ratio) {
    add(row, 'mcol' + (heading ? ' bold single' : ''), ratio, track('M'));
    add(row, heading ? 'mcol bold single' : 'center', average, track('N'));
  }
  if (n === 3) {
    add(row, 'center bold single', '2024', track('O'));
    add(row, 'center bold single', '2023', track('P'));
  }
  if (n === 39) {
    add(row, 'single', '', track('E'));
    const cell = add(row, '', '', track('C'));
    cell.append(Object.assign(document.createElement('i'), { className: 'cursor' }));
  }
  body.append(row);
});
```
